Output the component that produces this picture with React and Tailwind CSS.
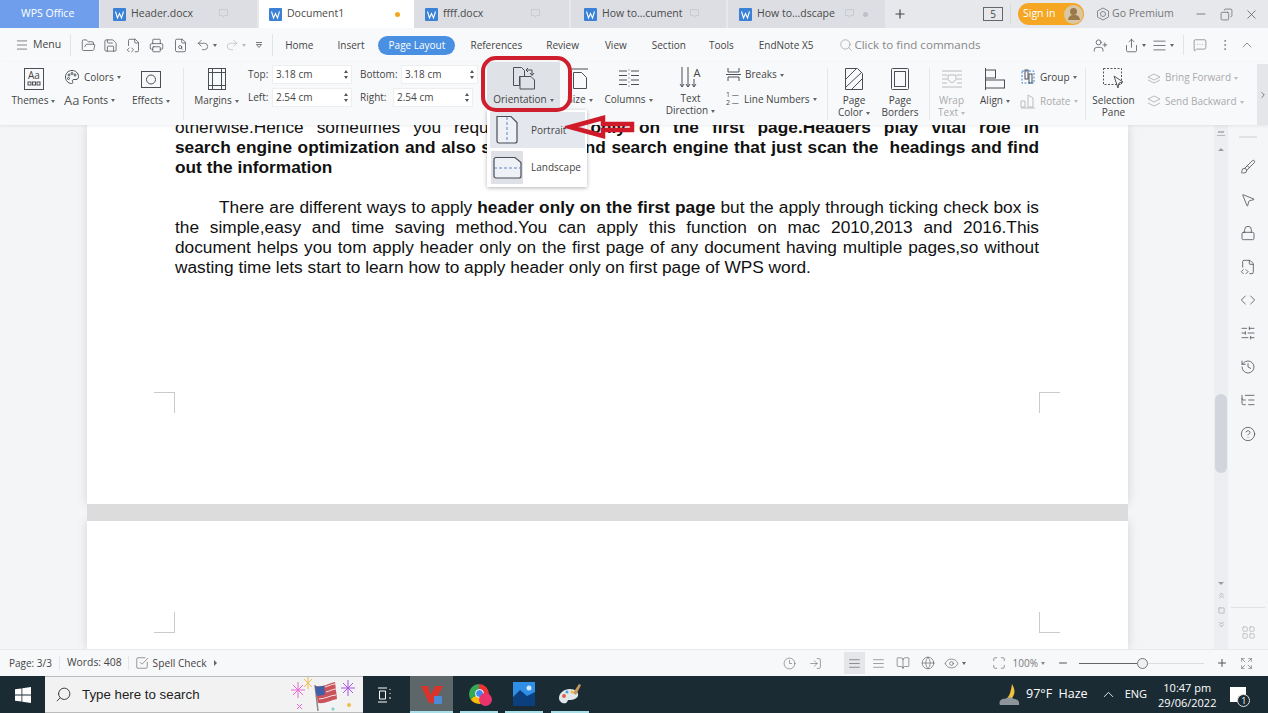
import React from "react";
import {
  Menu, FolderOpen, Save, Printer, FileSearch, Undo2, Redo2, Search, Minus, Plus, X, ChevronUp, Share, MessageSquareMore,
  MoreVertical, MousePointer2, Lock, SlidersHorizontal, History, CircleHelp, Globe, BookOpen, Eye, Square, Copy, UserPlus,
  ChevronRight, Code, Brush, FileCode2, Maximize, Expand, ChevronsUp, ChevronsDown, LayoutGrid, CheckSquare, Clock3, LogIn, AlignJustify, ListTree
} from "lucide-react";

const S = { fill: "none", stroke: "#4b4f55", strokeWidth: 1 };

function Caret({ c = "#666" }) {
  return <span className="inline-block ml-[3px] align-middle w-0 h-0 border-x-[2px] border-x-transparent border-t-[3px]" style={{ borderTopColor: c }} />;
}

function WIcon({ size = 13 }) {
  return (
    <svg width={size} height={size} viewBox="0 0 13 13" className="shrink-0">
      <rect width="13" height="13" rx="1" fill="#3b82d6" />
      <path d="M2.5 3.5 L4.5 10 L6.5 5.5 L8.5 10 L10.5 3.5" fill="none" stroke="#fff" strokeWidth="1.1" />
    </svg>
  );
}

function Bell() {
  return <svg width="11" height="12" viewBox="0 0 11 12" className="shrink-0"><path d="M1.5 1.5h8v6h-3l-1 2-1-2h-3z" fill="none" stroke="#c8cbd0" /></svg>;
}

function Tab({ label, box, dot, bell = true }) {
  return (
    <div className={"h-full shrink-0 flex items-center " + box}>
      <WIcon />
      <span className="ml-[5px] w-[87px] text-[#4a4a4a] whitespace-nowrap">{label}</span>
      {bell && <Bell />}
      {dot}
    </div>
  );
}

function TabBar() {
  return (
    <div className="h-[28px] bg-[#e6e8ec] flex items-center text-[10.5px] shrink-0">
      <div className="w-[99px] h-full bg-[#6f9fec] text-white flex items-center pl-[21px] mr-[1px]">WPS Office</div>
      <Tab label="Header.docx" box="w-[157px] pl-[13px] mr-[2px] bg-[#dcdee3]" />
      <Tab label="Document1" bell={false} box="w-[155px] pl-[10px] bg-white" dot={<span className="ml-[21px] w-[5px] h-[5px] rounded-full bg-[#f2a81d]" />} />
      <Tab label="ffff.docx" box="w-[155px] pl-[11px] mr-[2px] bg-[#dcdee3]" />
      <Tab label="How to...cument" box="w-[155px] pl-[13px] mr-[2px] bg-[#dcdee3]" />
      <Tab label="How to...dscape" box="w-[157px] pl-[11px] bg-[#dcdee3]" dot={<span className="w-[5px] h-[5px] rounded-full ml-[8px] bg-[#bdc0c6]" />} />
      <Plus size={14} strokeWidth={2} className="ml-[8px] text-[#444] shrink-0" />
      <div className="ml-[76px] w-[20px] h-[14px] border border-[#666] shrink-0 text-[10px] leading-[12px] text-center text-[#444]">5</div>
      <div className="ml-[7px] w-px h-[20px] bg-[#d6d8dc] shrink-0" />
      <div className="ml-[7px] w-[66px] h-[22px] rounded-full bg-[#f5a623] text-white flex items-center pl-[5px] shrink-0">
        Sign in
        <span className="ml-auto mr-[1px] w-[19px] h-[19px] rounded-full bg-[#d9c7a5] flex flex-col items-center justify-center">
          <span className="w-[7px] h-[7px] rounded-full bg-[#9a7a4a]" />
          <span className="w-[12px] h-[5px] rounded-t-full bg-[#9a7a4a]" />
        </span>
      </div>
      <div className="ml-[12px] flex items-center gap-[2px] text-[#777] shrink-0">
        <svg width="14" height="14" viewBox="0 0 14 14"><path d="M7 1l5.5 3v6L7 13l-5.5-3V4z" fill="none" stroke="#888" /><circle cx="7" cy="7" r="2.5" fill="none" stroke="#888" /></svg>
        Go Premium
      </div>
      <Minus size={14} strokeWidth={1.2} className="ml-[20px] text-[#555] shrink-0" />
      <Copy size={13} strokeWidth={1.2} className="ml-[12px] text-[#555] shrink-0 -scale-x-100" />
      <X size={15} strokeWidth={1.2} className="ml-[11px] text-[#555] shrink-0" />
    </div>
  );
}

function MenuTab({ children, ml, active }) {
  return (
    <span className={"whitespace-nowrap shrink-0 " + ml + " " + (active ? "bg-[#4a90e2] text-white rounded-full h-[19px] w-[77px] flex items-center justify-center" : "text-[#444]")}>
      {children}
    </span>
  );
}

function MenuRow() {
  const qa = "text-[#4b4f55] shrink-0";
  return (
    <div className="h-[34px] bg-[#f8f9fb] flex items-center text-[10px] shrink-0">
      <Menu size={14} strokeWidth={1.2} className="ml-[15px] text-[#555] shrink-0" />
      <span className="ml-[4px] text-[#444] text-[10.5px]">Menu</span>
      <div className="ml-[9px] w-px h-[22px] bg-[#e2e4e8] shrink-0" />
      <FolderOpen size={15} strokeWidth={1.2} className={"ml-[10px] " + qa} />
      <Save size={15} strokeWidth={1.2} className={"ml-[7px] " + qa} />
      <FileCode2 size={15} strokeWidth={1.2} className={"ml-[8px] " + qa} />
      <Printer size={15} strokeWidth={1.2} className={"ml-[8px] " + qa} />
      <FileSearch size={15} strokeWidth={1.2} className={"ml-[9px] " + qa} />
      <Undo2 size={14} strokeWidth={1.2} className={"ml-[8px] " + qa} />
      <Caret />
      <Redo2 size={14} strokeWidth={1.2} className="ml-[8px] text-[#b5b8bd] shrink-0" />
      <Caret c="#bbb" />
      <svg width="8" height="8" viewBox="0 0 8 8" className="ml-[9px] shrink-0"><path d="M1 1.5h6M1.5 3.5l2.5 3 2.5-3z" fill="none" stroke="#777" /></svg>
      <div className="ml-[9px] w-px h-[22px] bg-[#e2e4e8] shrink-0" />
      <MenuTab ml="ml-[12px]">Home</MenuTab>
      <MenuTab ml="ml-[24px]">Insert</MenuTab>
      <MenuTab ml="ml-[14px]" active>Page Layout</MenuTab>
      <MenuTab ml="ml-[15px]">References</MenuTab>
      <MenuTab ml="ml-[24px]">Review</MenuTab>
      <MenuTab ml="ml-[26px]">View</MenuTab>
      <MenuTab ml="ml-[25px]">Section</MenuTab>
      <MenuTab ml="ml-[23px]">Tools</MenuTab>
      <MenuTab ml="ml-[25px]">EndNote X5</MenuTab>
      <Search size={14} strokeWidth={1.2} className="ml-[26px] text-[#999] shrink-0" />
      <span className="ml-[1px] text-[#888] text-[11.6px] whitespace-nowrap">Click to find commands</span>
      <UserPlus size={15} strokeWidth={1.2} className={"ml-[112px] " + qa} />
      <Share size={15} strokeWidth={1.2} className={"ml-[16px] " + qa} />
      <Caret />
      <AlignJustify size={15} strokeWidth={1.2} className={"ml-[6px] " + qa} />
      <Caret />
      <div className="ml-[9px] w-px h-[20px] bg-[#e2e4e8] shrink-0" />
      <MessageSquareMore size={14} strokeWidth={1.2} className="ml-[9px] text-[#777] shrink-0" />
      <MoreVertical size={14} strokeWidth={1.2} className="ml-[11px] text-[#777] shrink-0" />
      <ChevronUp size={16} strokeWidth={1.2} className="ml-[7px] text-[#777] shrink-0" />
    </div>
  );
}

function Col({ w, ml, icon, lines, caretLast = true, dim, h = "h-[30px]" }) {
  return (
    <div className={"shrink-0 flex flex-col items-center pt-[2px] " + w + " " + ml + " " + (dim ? "text-[#aaa]" : "text-[#444]")}>
      <div className={"flex items-center justify-center " + h}>{icon}</div>
      {lines.map((l, i) => (
        <div key={l} className="leading-[12px] whitespace-nowrap">
          {l}
          {caretLast && i === lines.length - 1 && <Caret c={dim ? "#bbb" : "#666"} />}
        </div>
      ))}
    </div>
  );
}

function Sep({ ml }) {
  return <div className={"w-px h-[52px] self-center bg-[#e6e7ea] shrink-0 " + ml} />;
}

function Row({ icon, label, dim, gap = "gap-[4px]" }) {
  return (
    <div className={"flex items-center whitespace-nowrap " + gap + " " + (dim ? "text-[#aaa]" : "text-[#444]")}>
      {icon}
      <span>{label}<Caret c={dim ? "#bbb" : "#666"} /></span>
    </div>
  );
}

function Spin({ label, value, lw, iw }) {
  return (
    <div className="flex items-center h-[19px]">
      <span className={"text-[#444] " + lw}>{label}</span>
      <div className={"h-[19px] bg-white border border-[#eceef0] pl-[3px] flex items-center text-[#444] " + iw}>
        <span className="flex-1">{value}</span>
        <span className="flex flex-col gap-[3px] mr-[3px]">
          <span className="w-0 h-0 border-x-[2.5px] border-x-transparent border-b-[3px] border-b-[#555]" />
          <span className="w-0 h-0 border-x-[2.5px] border-x-transparent border-t-[3px] border-t-[#555]" />
        </span>
      </div>
    </div>
  );
}

function Ribbon() {
  return (
    <div className="relative z-20 h-[63px] bg-[#f8f9fb] shadow-[0_1px_3px_rgba(0,0,0,0.08)] flex text-[10px] shrink-0 pl-[10px]">
      <Col w="w-[47px]" ml="" lines={["Themes"]} icon={
        <svg width="22" height="24" viewBox="0 0 22 24"><rect x="1.5" y="1.5" width="19" height="21" {...S} /><text x="11" y="12" textAnchor="middle" fontSize="10" fill="#444" fontFamily="Open Sans">Aa</text><rect x="5" y="15" width="3" height="3" {...S} /><rect x="9.5" y="15" width="3" height="3" {...S} /><rect x="14" y="15" width="3" height="3" {...S} /></svg>
      } />
      <div className="ml-[7px] w-[58px] shrink-0 flex flex-col pt-[7px] gap-[7px]">
        <Row label="Colors" icon={<svg width="16" height="16" viewBox="0 0 16 16"><path d="M8 1.5C4 1.5 1.5 4.5 1.5 8S4 14.5 7.5 14.5c1.5 0 1.5-1 1-2s0-2 1.5-2h2c1.500 0 2.500-1 2.500-3C14.500 4 11.500 1.500 8 1.500z" {...S} /><circle cx="5" cy="6" r="1" {...S} /><circle cx="8" cy="4.500" r="1" {...S} /><circle cx="11" cy="6" r="1" {...S} /><circle cx="4.500" cy="9.500" r="1" {...S} /></svg>} />
        <Row label="Fonts" icon={<span className="text-[13px] leading-[16px] text-[#555]">Aa</span>} gap="gap-[3px]" />
      </div>
      <Col w="w-[42px]" ml="ml-[8px]" lines={["Effects"]} icon={
        <svg width="22" height="20" viewBox="0 0 22 20"><rect x="1.5" y="2.500" width="19" height="16" {...S} /><circle cx="11" cy="10.500" r="4.500" {...S} /></svg>
      } />
      <Sep ml="ml-[11px]" />
      <Col w="w-[47px]" ml="ml-[9px]" lines={["Margins"]} icon={
        <svg width="20" height="24" viewBox="0 0 20 24"><rect x="1.500" y="1.500" width="17" height="21" {...S} /><path d="M1.500 5.500h17M1.500 18.500h17M5.500 1.500v21M14.500 1.500v21" {...S} /></svg>
      } />
      <div className="ml-[8px] w-[230px] shrink-0 flex flex-col pt-[3px] gap-[4px]">
        <div className="flex">
          <Spin label="Top:" value="3.18 cm" lw="w-[24px]" iw="w-[80px]" />
          <span className="w-[8px]" />
          <Spin label="Bottom:" value="3.18 cm" lw="w-[41px]" iw="w-[77px]" />
        </div>
        <div className="flex">
          <Spin label="Left:" value="2.54 cm" lw="w-[24px]" iw="w-[80px]" />
          <span className="w-[8px]" />
          <Spin label="Right:" value="2.54 cm" lw="w-[33px]" iw="w-[80px]" />
        </div>
      </div>
      <div className="ml-[9px] w-[73px] shrink-0 h-[50px] bg-[#dfe3e8] flex flex-col items-center pt-[1px] text-[#444]">
        <div className="h-[30px] flex items-center">
          <svg width="26" height="26" viewBox="0 0 26 26"><path d="M2.500 2.500h8l3 3v6h-5v9h-6z" {...S} /><path d="M9 11.500h11l3.500 3.500v9H9z" {...S} /><path d="M15 5h6v5M19 8l2 2.500 2-2.500M17 3l-2 2 2 2" {...S} /></svg>
        </div>
        <div className="leading-[12px] whitespace-nowrap">Orientation<Caret /></div>
      </div>
      <Col w="w-[30px]" ml="ml-[5px]" lines={["Size"]} h="h-[29px]" icon={
        <svg width="18" height="24" viewBox="0 0 18 24"><path d="M1 2h16" {...S} /><path d="M2.500 5.500h8l5 5v11h-13z" {...S} /></svg>
      } />
      <Col w="w-[49px]" ml="ml-[9px]" lines={["Columns"]} h="h-[29px]" icon={
        <svg width="24" height="22" viewBox="0 0 24 22"><path d="M2 3h8M2 7.500h8M2 12h8M2 16.500h8M14 3h8M14 7.500h8M14 12h8M14 16.500h8" {...S} /><path d="M12 1v20" stroke="#aaa" strokeDasharray="2 2" fill="none" /></svg>
      } />
      <Col w="w-[51px]" ml="ml-[12px]" lines={["Text", "Direction"]} h="h-[28px]" icon={
        <svg width="24" height="26" viewBox="0 0 24 26"><path d="M3 2v20M3 22l-2-3M3 22l2-3M9 2v20M9 22l-2-3M9 22l2-3M15 14v8M15 22l-2-3M15 22l2-3" {...S} /><text x="18" y="12" textAnchor="middle" fontSize="11" fill="#444" fontFamily="Open Sans">A</text></svg>
      } />
      <div className="ml-[10px] w-[92px] shrink-0 flex flex-col pt-[5px] gap-[9px]">
        <Row label="Breaks" icon={<svg width="15" height="15" viewBox="0 0 15 15"><path d="M2 1v4h11V1M0 7.500h15M2 14v-4h11v4" {...S} /></svg>} />
        <Row label="Line Numbers" icon={<span className="text-[7px] leading-[8px] w-[14px] text-[#444] flex flex-col"><span>1 —</span><span>2 —</span></span>} />
      </div>
      <Sep ml="ml-[9px]" />
      <Col w="w-[32px]" ml="ml-[10px]" lines={["Page", "Color"]} icon={
        <svg width="20" height="24" viewBox="0 0 20 24"><path d="M1.500 1.500h12l5 5v16h-17z" {...S} /><path d="M2 12L12 2M2 20L18 5M8 22L18 12" {...S} /></svg>
      } />
      <Col w="w-[36px]" ml="ml-[12px]" lines={["Page", "Borders"]} caretLast={false} icon={
        <svg width="20" height="24" viewBox="0 0 20 24"><rect x="1.500" y="1.500" width="17" height="21" rx="1" {...S} /><rect x="4.500" y="4.500" width="11" height="15" {...S} /></svg>
      } />
      <Sep ml="ml-[11px]" />
      <Col w="w-[27px]" ml="ml-[8px]" dim lines={["Wrap", "Text"]} icon={
        <svg width="22" height="20" viewBox="0 0 22 20"><path d="M1 2h20M1 6h5M1 10h5M1 14h5M16 6h5M16 10h5M16 14h5M1 18h20" fill="none" stroke="#bbb" /><path d="M7 6h8v5l-4 3-4-3z" fill="none" stroke="#bbb" /></svg>
      } />
      <Col w="w-[34px]" ml="ml-[13px]" lines={["Align"]} icon={
        <svg width="22" height="24" viewBox="0 0 22 24"><path d="M1.500 1v22" {...S} /><rect x="1.500" y="3" width="10" height="8" {...S} /><rect x="1.500" y="13" width="19" height="8" {...S} /></svg>
      } />
      <div className="ml-[8px] w-[63px] shrink-0 flex flex-col pt-[7px] gap-[8px]">
        <Row label="Group" icon={<svg width="16" height="16" viewBox="0 0 16 16"><rect x="2" y="2" width="12" height="12" fill="none" stroke="#3b82d6" strokeDasharray="2 1.500" /><rect x="5" y="1" width="3" height="9" {...S} /><rect x="9" y="5" width="3" height="9" {...S} /></svg>} />
        <Row dim label="Rotate" icon={<svg width="16" height="16" viewBox="0 0 16 16"><path d="M1 14V8h4v6zM8 14V2l5 3v9zM1 15h14" fill="none" stroke="#bbb" /></svg>} />
      </div>
      <Sep ml="ml-[2px]" />
      <Col w="w-[45px]" ml="ml-[5px]" caretLast={false} lines={["Selection", "Pane"]} icon={
        <svg width="24" height="24" viewBox="0 0 24 24"><rect x="1.500" y="1.500" width="18" height="16" fill="none" stroke="#555" strokeDasharray="2 1.500" /><path d="M12 9l9 6-4 1-1 5z" fill="#f8f9fb" stroke="#555" /></svg>
      } />
      <div className="ml-[11px] w-[103px] shrink-0 flex flex-col pt-[8px] gap-[9px]">
        <Row dim label="Bring Forward" gap="gap-[3px]" icon={<svg width="15" height="15" viewBox="0 0 15 15"><path d="M1 7l6-3 6 3-6 3zM1 10l6 3 6-3" fill="none" stroke="#bbb" /></svg>} />
        <Row dim label="Send Backward" gap="gap-[3px]" icon={<svg width="15" height="15" viewBox="0 0 15 15"><path d="M1 5l6-3 6 3-6 3zM1 9l6 3 6-3" fill="none" stroke="#bbb" /></svg>} />
      </div>
      <div className="ml-auto w-[11px] h-[61px] mt-[2px] bg-[#e4e6ea] flex items-center justify-center shrink-0">
        <ChevronRight size={10} className="text-[#666]" />
      </div>
    </div>
  );
}

function Line({ children, last, indent }) {
  return (
    <div className={"h-[20px] " + (last ? "whitespace-nowrap " : "whitespace-normal [text-align:justify] [text-align-last:justify] ") + (indent ? "pl-[44px]" : "")}>
      {children}
    </div>
  );
}

function Corner({ pos }) {
  return <div className={"absolute w-[21px] h-[21px] border-[#c9cbce] " + pos} />;
}

function Doc() {
  return (
    <div className="flex-1 min-h-0 flex bg-[#f4f5f7]">
      <div className="w-[1214px] shrink-0 pl-[87px] overflow-hidden">
        <div className="relative w-[1041px] h-[379px] bg-white shadow-[0_0_10px_rgba(0,0,0,0.14)] pl-[88px] overflow-hidden">
          <div className="w-[864px] -mt-[8px] text-[17.3px] leading-[20px] text-[#111] font-['Liberation_Sans',sans-serif]">
            <Line>otherwise.Hence sometimes you require <b>header only on the first page.Headers play vital role in</b></Line>
            <Line><b>search engine optimization and also simplify to find search engine that just scan the &nbsp;headings and find</b></Line>
            <Line last><b>out the information</b></Line>
            <div className="h-[20px]" />
            <Line indent>There are different ways to apply <b>header only on the first page</b> but the apply through ticking check box is</Line>
            <Line>the simple,easy and time saving method.You can apply this function on mac 2010,2013 and 2016.This</Line>
            <Line>document helps you tom apply header only on the first page of any document having multiple pages,so without</Line>
            <Line last>wasting time lets start to learn how to apply header only on first page of WPS word.</Line>
          </div>
          <Corner pos="left-[67px] top-[267px] border-t border-r" />
          <Corner pos="left-[952px] top-[267px] border-t border-l" />
        </div>
        <div className="relative z-10 w-[1041px] h-[17px] bg-[#dcdcdc]" />
        <div className="relative w-[1041px] h-[128px] bg-white shadow-[0_0_10px_rgba(0,0,0,0.14)]">
          <Corner pos="left-[67px] top-[91px] border-b border-r" />
          <Corner pos="left-[952px] top-[91px] border-b border-l" />
        </div>
      </div>
      <div className="w-[14px] shrink-0 bg-[#eceef2] flex flex-col items-center text-[#9a9da3]">
        <div className="h-[17px] flex flex-col justify-center items-center gap-[2px]">
          <span className="w-[6px] h-[2px] bg-[#b5b8bd]" />
          <span className="w-[8px] h-[1px] bg-[#b5b8bd]" />
        </div>
        <span className="mt-[6px] w-0 h-0 border-x-[3px] border-x-transparent border-b-[3px] border-b-[#9a9da3]" />
        <div className="mt-[243px] w-[12px] h-[79px] rounded-full bg-[#d2d5dc]" />
        <span className="mt-[109px] w-0 h-0 border-x-[3px] border-x-transparent border-t-[3px] border-t-[#9a9da3]" />
        <ChevronsUp size={9} className="mt-[6px]" />
        <Square size={7} className="mt-[7px]" />
        <ChevronsDown size={9} className="mt-[6px]" />
      </div>
      <div className="flex-1 bg-[#f5f6f8] flex flex-col items-center text-[#4b4f55]">
        <div className="mt-[11px] w-[18px] h-[2px] bg-[#e0e2e6]" />
        <Brush size={16} strokeWidth={1.2} className="mt-[21px]" />
        <MousePointer2 size={16} strokeWidth={1.2} className="mt-[17px]" />
        <Lock size={16} strokeWidth={1.2} className="mt-[17px]" />
        <FileCode2 size={16} strokeWidth={1.2} className="mt-[18px]" />
        <Code size={16} strokeWidth={1.2} className="mt-[17px]" />
        <SlidersHorizontal size={16} strokeWidth={1.2} className="mt-[17px]" />
        <History size={16} strokeWidth={1.2} className="mt-[18px]" />
        <ListTree size={16} strokeWidth={1.2} className="mt-[17px]" />
        <CircleHelp size={16} strokeWidth={1.2} className="mt-[18px]" />
        <div className="mt-auto w-[34px] h-px bg-[#e0e2e6]" />
        <LayoutGrid size={15} strokeWidth={1} className="mt-[17px] mb-[9px] text-[#a5a8ad]" />
      </div>
    </div>
  );
}

function StatusBar() {
  const c = "text-[#555] shrink-0";
  return (
    <div className="h-[27px] bg-[#f7f8fa] border-t border-[#e8e9ec] flex items-center text-[10px] text-[#444] shrink-0">
      <span className="ml-[9px]">Page: 3/3</span>
      <span className="ml-[7px] w-px h-[14px] bg-[#e4e5e8]" />
      <span className="ml-[7px] text-[10.4px]">Words: 408</span>
      <span className="ml-[6px] w-px h-[14px] bg-[#e4e5e8]" />
      <CheckSquare size={14} strokeWidth={1} className={"ml-[6px] " + c} />
      <span className="ml-[4px] text-[10.2px] mt-[1px]">Spell Check</span>
      <span className="ml-[7px] w-0 h-0 border-y-[3px] border-y-transparent border-l-[3px] border-l-[#666]" />
      <Clock3 size={13} strokeWidth={1} className={"ml-[566px] " + c} />
      <LogIn size={13} strokeWidth={1} className={"ml-[13px] " + c} />
      <span className="ml-[22px] w-[21px] h-[22px] bg-[#e4e6ea] flex items-center justify-center shrink-0">
        <AlignJustify size={13} strokeWidth={1} className="text-[#444]" />
      </span>
      <AlignJustify size={13} strokeWidth={1} className={"ml-[7px] " + c} />
      <BookOpen size={14} strokeWidth={1} className={"ml-[11px] " + c} />
      <Globe size={14} strokeWidth={1} className={"ml-[11px] " + c} />
      <Eye size={15} strokeWidth={1} className={"ml-[9px] " + c} />
      <Caret />
      <Maximize size={14} strokeWidth={1} className={"ml-[26px] " + c} />
      <span className="ml-[7px] text-[#777]">100%</span>
      <Caret c="#888" />
      <Minus size={12} strokeWidth={2} className={"ml-[12px] " + c} />
      <span className="ml-[10px] w-[58px] h-px bg-[#666] shrink-0" />
      <span className="w-[11px] h-[11px] rounded-full border border-[#777] bg-[#f0f0f0] shrink-0" />
      <span className="w-[56px] h-px bg-[#ddd] shrink-0" />
      <Plus size={12} strokeWidth={2} className={"ml-[12px] " + c} />
      <Expand size={13} strokeWidth={1} className={"ml-[12px] " + c} />
    </div>
  );
}

function Taskbar() {
  return (
    <div className="h-[37px] bg-[#1b2b33] flex items-center text-white shrink-0 font-['Open_Sans',sans-serif]">
      <div className="w-[45px] flex justify-center shrink-0">
        <svg width="16" height="16" viewBox="0 0 16 16" fill="#fff"><path d="M0 2.300l6.500-.9v6.200H0zM7.300 1.300L16 0v7.600H7.300zM0 8.400h6.500v6.200L0 13.700zM7.300 8.400H16V16l-8.700-1.200z" /></svg>
      </div>
      <div className="w-[318px] h-full bg-[#f2f2f2] border-y border-[#bbb] flex items-center shrink-0 text-[#222]">
        <Search size={17} strokeWidth={1.3} className="ml-[10px] -scale-x-100 text-[#333]" />
        <span className="ml-[10px] text-[13.3px] font-['Liberation_Sans',sans-serif]">Type here to search</span>
        <svg width="74" height="36" viewBox="0 0 74 36" className="ml-auto">
          <g stroke="#e86ad6" strokeWidth="1"><path d="M4 8l10 10M14 8L4 18M9 5v16M2 13h14" /></g>
          <g stroke="#f3bb4c" strokeWidth="1"><path d="M15 2l8 8M23 2l-8 8M19 0v12" /></g>
          <path d="M8 27l5 5M13 27l-5 5" stroke="#e86ad6" />
          <path d="M26 8l3 26" stroke="#888" strokeWidth="1.500" />
          <path d="M26 9c8 2 14-3 20-4l2 17c-6 1-12 5-19 4z" fill="#c9525b" />
          <path d="M26 9c3 1 6 .5 9-.5l1 9c-3 1-6 1.500-8.500 1z" fill="#3f5fa8" />
          <path d="M36 10c4-1 7-3 10-3M37 15c4-1 7-3 10-3M30 22c6 0 12-4 17-4" stroke="#f3e3e3" fill="none" />
          <g stroke="#a855e8" strokeWidth="1"><path d="M54 6l10 10M64 6L54 16M59 3v16M52 11h14" /></g>
          <circle cx="60" cy="28" r="2" fill="#f3bb4c" /><circle cx="44" cy="32" r="1.500" fill="#7cc" />
        </svg>
      </div>
      <svg width="16" height="16" viewBox="0 0 16 16" className="ml-[14px] shrink-0" fill="none" stroke="#fff"><path d="M1 1h9M1 15h9M2.500 4h6v8h-6zM13 2v1M13 6v1M13 10v2" /></svg>
      <div className="ml-[17px] w-[43px] h-full bg-[#5d6669] border-b-2 border-[#a8dfe8] flex items-center justify-center shrink-0">
        <svg width="24" height="20" viewBox="0 0 24 20"><path d="M1 2h7l3 9 4-9h8L14 19H9z" fill="#d9342b" /><rect x="14" y="12" width="8" height="8" rx="1" fill="#4a8ad6" /></svg>
      </div>
      <div className="ml-[7px] w-[38px] h-full border-b-2 border-[#a8dfe8] flex items-center justify-center shrink-0">
        <div className="w-[20px] h-[20px] rounded-full relative bg-[conic-gradient(#e33_0_33%,#fbbc05_33%_66%,#34a853_66%)] flex items-center justify-center">
          <span className="w-[9px] h-[9px] rounded-full bg-[#4285f4] border border-white" />
          <span className="absolute -right-[3px] -bottom-[2px] w-[13px] h-[13px] rounded-full bg-[#e8336d]" />
        </div>
      </div>
      <div className="ml-[7px] w-[38px] h-full border-b-2 border-[#a8dfe8] flex items-center justify-center shrink-0">
        <svg width="22" height="24" viewBox="0 0 22 24"><rect width="22" height="24" fill="#2f8fe6" /><path d="M0 24V15l7-7 7 6 8-4v14z" fill="#0b3f7e" /><circle cx="16" cy="6" r="2.500" fill="#cfeaff" /></svg>
      </div>
      <div className="ml-[8px] w-[38px] h-full border-b-2 border-[#a8dfe8] flex items-center justify-center shrink-0">
        <svg width="24" height="24" viewBox="0 0 24 24"><path d="M12 7C6 7 1 11 1 16c0 4 4 6 7 5 2-1 1-3 3-3s7 0 9-4c1-4-3-7-8-7z" fill="#dfe7ea" /><circle cx="6" cy="14" r="2" fill="#e0614a" /><circle cx="9" cy="10" r="1.500" fill="#3fa7d6" /><circle cx="14" cy="10" r="1.500" fill="#f0b83c" /><path d="M15 11l6-9 2 1-5 10z" fill="#c79a5b" /></svg>
      </div>
      <svg width="24" height="24" viewBox="0 0 24 24" className="ml-[409px] shrink-0"><path d="M14 1c3 5 4 10-1 15l-6 1c5-3 6-10 7-16z" fill="#f0c23c" /><path d="M2 22c-2-4 2-7 5-6 2-2 7-2 9 0 3 0 6 2 5 6z" fill="#8d959a" /></svg>
      <span className="ml-[4px] text-[12.5px] whitespace-nowrap">97°F&nbsp; Haze</span>
      <ChevronUp size={17} strokeWidth={1.2} className="ml-[12px] shrink-0" />
      <span className="ml-[8px] text-[11px]">ENG</span>
      <div className="ml-[11px] flex flex-col items-center text-[11px] leading-[15px] shrink-0">
        <span>10:47 pm</span>
        <span>29/06/2022</span>
      </div>
      <div className="ml-[14px] relative shrink-0 w-[16px] h-[15px] bg-white">
        <span className="absolute -right-[4px] -bottom-[5px] w-[13px] h-[13px] rounded-full bg-[#1b2b33] border border-[#ddd] text-[9px] leading-[11px] text-center">1</span>
      </div>
    </div>
  );
}

function Overlays() {
  return (
    <>
      <div className="absolute z-30 left-[487px] top-[110px] w-[100px] h-[77px] bg-white shadow-[0_1px_4px_rgba(0,0,0,0.3)] text-[10px] text-[#444] flex flex-col pt-[2px] pl-[3px] pr-[2px]">
        <div className="h-[36px] bg-[#e4e8ee] flex items-center">
          <svg width="24" height="30" viewBox="0 0 24 30" className="ml-[5px]"><path d="M2 1.500h14l6 6V26a2 2 0 0 1-2 2H4a2 2 0 0 1-2-2z" fill="#eef1f5" stroke="#4b4f55" strokeWidth="1.200" /><path d="M12 2v26" stroke="#5a86c8" strokeDasharray="3 2" /></svg>
          <span className="ml-[12px]">Portrait</span>
        </div>
        <div className="mt-[2px] h-[35px] flex items-center">
          <div className="ml-[1px] w-[32px] h-[33px] bg-[#dfe1e6] flex items-center justify-center shrink-0">
            <svg width="29" height="24" viewBox="0 0 29 24"><path d="M3 1.500h19l6 5V20a2 2 0 0 1-2 2H3a2 2 0 0 1-2-2V3.500a2 2 0 0 1 2-2z" fill="#eef1f5" stroke="#4b4f55" strokeWidth="1.200" /><path d="M1 12h27" stroke="#5a86c8" strokeDasharray="3 2" /></svg>
          </div>
          <span className="ml-[8px]">Landscape</span>
        </div>
      </div>
      <div className="absolute z-40 left-[481px] top-[56px] w-[91px] h-[56px] border-[4px] border-[#cf1f2e] rounded-[15px]" />
      <svg width="72" height="26" viewBox="0 0 72 26" className="absolute z-40 left-[565px] top-[114px]">
        <path d="M5 13L38 4v6h29v6H38v6z" fill="none" stroke="#d01a2a" strokeWidth="4.500" />
      </svg>
    </>
  );
}

export default function App() {
  return (
    <div className="relative w-[1268px] h-[713px] overflow-hidden flex flex-col bg-white font-['Open_Sans',sans-serif]">
      <TabBar />
      <MenuRow />
      <Ribbon />
      <Doc />
      <StatusBar />
      <Taskbar />
      <Overlays />
    </div>
  );
}
